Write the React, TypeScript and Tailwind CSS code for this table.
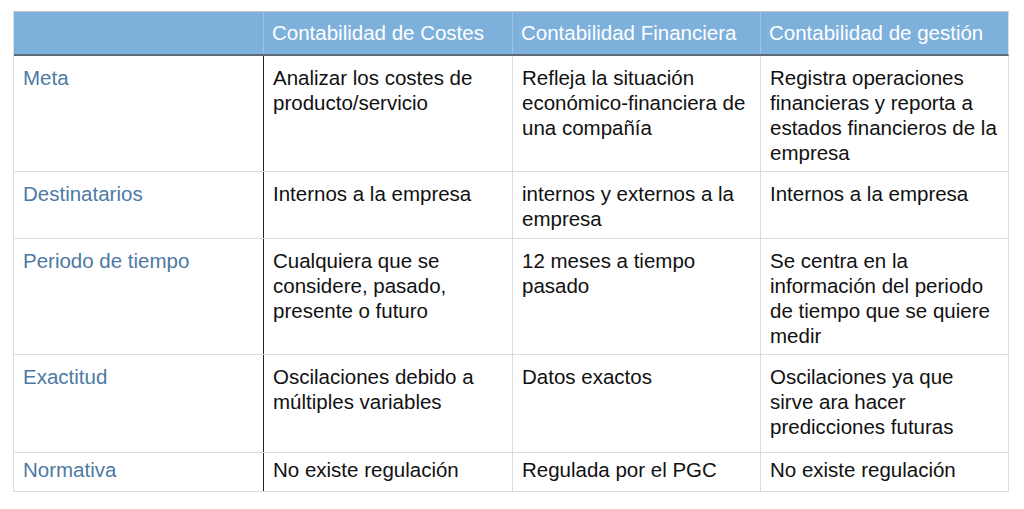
const headers = ["", "Contabilidad de Costes", "Contabilidad Financiera", "Contabilidad de gestión"];

const rows = [
  {
    label: "Meta",
    h: "h-[116px] pt-[9px]",
    cells: [
      ["Analizar los costes de", "producto/servicio"],
      ["Refleja la situación", "económico-financiera de", "una compañía"],
      ["Registra operaciones", "financieras y reporta a", "estados financieros de la", "empresa"],
    ],
  },
  {
    label: "Destinatarios",
    h: "h-[67px] pt-[9px]",
    cells: [["Internos a la empresa"], ["internos y externos a la", "empresa"], ["Internos a la empresa"]],
  },
  {
    label: "Periodo de tiempo",
    h: "h-[116px] pt-[9px]",
    cells: [
      ["Cualquiera que se", "considere, pasado,", "presente o futuro"],
      ["12 meses a tiempo", "pasado"],
      ["Se centra en la", "información del periodo", "de tiempo que se quiere", "medir"],
    ],
  },
  {
    label: "Exactitud",
    h: "h-[98px] pt-[9px]",
    cells: [
      ["Oscilaciones debido a", "múltiples variables"],
      ["Datos exactos"],
      ["Oscilaciones ya que", "sirve ara hacer", "predicciones futuras"],
    ],
  },
  {
    label: "Normativa",
    h: "h-[39px] pt-[4px]",
    cells: [["No existe regulación"], ["Regulada por el PGC"], ["No existe regulación"]],
  },
];

const App = () => {
  return (
    <div className="h-[509px] w-[1024px] bg-white pl-[13px] pt-[11px] font-['Liberation_Sans',Arial,sans-serif]">
      <div className="w-[996px] border-l border-[#dcdcdc]">
        {/* header */}
        <div className="grid h-[45px] grid-cols-[249px_249px_248px_249px] border-t border-b-2 border-t-[#c8c8c8] border-b-[#5d6b78] bg-[#7eb0dc] border-r border-r-[#dcdcdc]">
          {headers.map((h, i) => (
            <div
              key={i}
              className={`flex items-center pl-[8px] text-[20.5px] text-white ${i > 0 ? "border-l border-[#9cc3e4]" : ""}`}
            >
              {h}
            </div>
          ))}
        </div>
        {rows.map((r, ri) => (
          <div
            key={ri}
            className={`grid ${r.h.split(" ")[0]} grid-cols-[249px_249px_248px_249px] border-b border-r border-[#dcdcdc]`}
          >
            <div className={`pl-[9px] ${r.h.split(" ")[1]} text-[20.5px] leading-[25px] text-[#4d79a4]`}>{r.label}</div>
            {r.cells.map((lines, ci) => (
              <div
                key={ci}
                className={`pl-[9px] ${r.h.split(" ")[1]} text-[20.5px] leading-[25px] text-[#111] ${
                  ci === 0 ? "border-l border-[#222]" : "border-l border-[#dcdcdc]"
                }`}
              >
                {lines.map((l, li) => (
                  <div key={li} className="whitespace-nowrap">
                    {l}
                  </div>
                ))}
              </div>
            ))}
          </div>
        ))}
      </div>
    </div>
  );
};

export default App;
